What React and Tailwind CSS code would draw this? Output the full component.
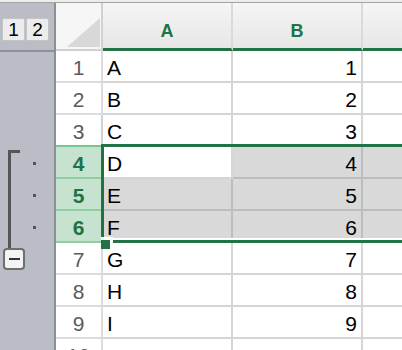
const rows = [
  ['A', 1], ['B', 2], ['C', 3], ['D', 4], ['E', 5], ['F', 6], ['G', 7], ['H', 8], ['I', 9], ['', ''],
];

const OutlinePane = () => (
  <div className="relative w-[56px] shrink-0 bg-[#babdc6] border-r-2 border-[#8c8f96]">
    {/* Level buttons */}
    <div className="h-[49px] border-b-2 border-[#8c8f96] flex items-start pt-[15px] pl-[2px] gap-[1px]">
      <div className="w-[23px] h-[23px] bg-[#ececec] border border-[#c4c4c4] rounded-[2px] flex items-center justify-center text-[19px] leading-none text-black">1</div>
      <div className="w-[23px] h-[23px] bg-[#ececec] border border-[#c4c4c4] rounded-[2px] flex items-center justify-center text-[19px] leading-none text-black">2</div>
    </div>

    {/* Group bracket */}
    <div className="absolute left-[8px] top-[147px] w-[3px] h-[98px] bg-[#555]" />
    <div className="absolute left-[8px] top-[147px] w-[12px] h-[3px] bg-[#555]" />
    <div className="absolute left-[33px] top-[159px] w-[3px] h-[3px] bg-[#555]" />
    <div className="absolute left-[33px] top-[191px] w-[3px] h-[3px] bg-[#555]" />
    <div className="absolute left-[33px] top-[223px] w-[3px] h-[3px] bg-[#555]" />
    <div className="absolute left-[3px] top-[245px] w-[22px] h-[22px] rounded-[4px] border-2 border-[#6e6e6e] bg-[#f4f4f4] flex items-center justify-center">
      <div className="w-[11px] h-[2px] bg-[#333]" />
    </div>
  </div>
);

const Grid = () => (
  <div className="relative flex-1 flex flex-col">
    {/* Column headers */}
    <div className="flex h-[48px]">
      <div className="w-[47px] h-[48px] shrink-0 bg-[#f6f6f6] border-r-2 border-b-2 border-[#d0d0d0] relative">
        <svg className="absolute right-[1px] bottom-[2px]" width="33" height="29" viewBox="0 0 33 29">
          <polygon points="0,29 33,29 33,0" fill="#d8d8d8" />
        </svg>
      </div>
      <div className="w-[130px] shrink-0 bg-gradient-to-b from-[#f5f5f5] to-[#e7e7e7] border-r-2 border-[#dadada] border-b-[3px] border-b-[#217346] pt-[19px] text-center text-[18px] leading-[18px] font-bold text-[#217346]">A</div>
      <div className="w-[130px] shrink-0 bg-gradient-to-b from-[#f5f5f5] to-[#e7e7e7] border-r-2 border-[#dadada] border-b-[3px] border-b-[#217346] pt-[19px] text-center text-[18px] leading-[18px] font-bold text-[#217346]">B</div>
      <div className="flex-1 bg-gradient-to-b from-[#f5f5f5] to-[#e7e7e7] border-b-[3px] border-b-[#217346]" />
    </div>

    {rows.map(([a, b], i) => {
      const n = i + 1;
      const sel = n >= 4 && n <= 6;
      return (
        <div key={n} className="flex h-[32px] shrink-0">
          <div
            className={
              sel
                ? 'w-[47px] shrink-0 h-[32px] bg-[#c6e3cf] border-r-2 border-[#d0d0d0] border-b-2 border-b-[#8fcf9f] text-center pt-[2px] text-[21px] leading-[30px] font-bold text-[#217346]'
                : n === 3
                ? 'w-[47px] shrink-0 h-[32px] bg-white border-r-2 border-[#d0d0d0] border-b-2 border-b-[#79c48b] text-center pt-[2px] text-[21px] leading-[30px] text-[#5a5a5a]'
                : 'w-[47px] shrink-0 h-[32px] bg-white border-r-2 border-b-2 border-[#dcdcdc] text-center pt-[2px] text-[21px] leading-[30px] text-[#5a5a5a]'
            }
          >
            {n}
          </div>
          <div
            className={
              sel && n !== 4
                ? 'w-[130px] shrink-0 h-[32px] bg-[#d9d9d9] border-r-2 border-b-2 border-[#bdbdbd] pl-[4px] pt-[2px] text-[21px] leading-[30px] text-black'
                : 'w-[130px] shrink-0 h-[32px] bg-white border-r-2 border-b-2 border-[#d6d6d6] pl-[4px] pt-[2px] text-[21px] leading-[30px] text-black'
            }
          >
            {a}
          </div>
          <div
            className={
              sel
                ? 'w-[130px] shrink-0 h-[32px] bg-[#d9d9d9] border-r-2 border-b-2 border-[#bdbdbd] pr-[4px] pt-[2px] text-right text-[21px] leading-[30px] text-black'
                : 'w-[130px] shrink-0 h-[32px] bg-white border-r-2 border-b-2 border-[#d6d6d6] pr-[4px] pt-[2px] text-right text-[21px] leading-[30px] text-black'
            }
          >
            {b}
          </div>
          <div
            className={
              sel
                ? 'flex-1 h-[32px] bg-[#d9d9d9] border-b-2 border-[#bdbdbd]'
                : 'flex-1 h-[32px] bg-white border-b-2 border-[#d6d6d6]'
            }
          />
        </div>
      );
    })}

    {/* Selection outline */}
    <div className="absolute left-[45px] top-[141px] w-[320px] h-[99px] border-[3px] border-[#217346] pointer-events-none">
      <div className="absolute left-0 right-0 bottom-0 h-[2px] bg-white" />
    </div>
    <div className="absolute left-[45px] top-[234px] w-[12px] h-[12px] bg-[#217346] border-t-[3px] border-r-[3px] border-white" />
  </div>
);

export default function App() {
  return (
    <div className="w-[402px] h-[350px] overflow-hidden bg-white flex flex-col font-['Liberation_Sans',Arial,sans-serif]">
      <div className="h-[3px] shrink-0 bg-[#ececec] border-b border-[#a3a3a3]" />
      <div className="flex flex-1 overflow-hidden">
        <OutlinePane />
        <Grid />
      </div>
    </div>
  );
}
